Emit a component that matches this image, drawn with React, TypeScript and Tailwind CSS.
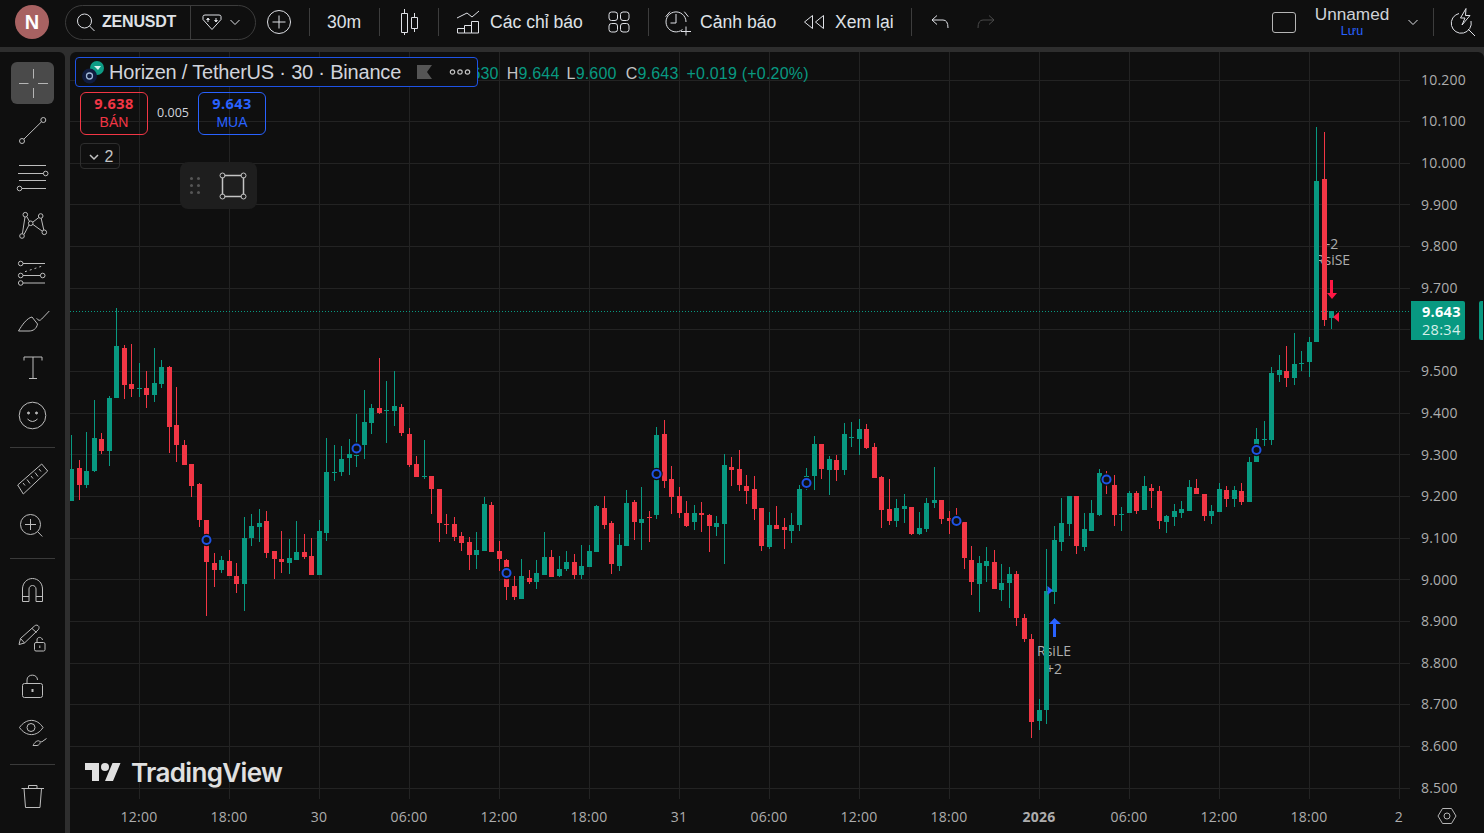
import React from 'react';

type Candle = [number, number, number, number, number];

// [green?, wick top, body top, body bottom, wick bottom]; one candle every 7.5px, first at x=71.5
const candles: Candle[] = [
  [1,435,469,501,501],[0,460,468,485,500],[1,432,471,485,488],[1,400,438,471,472],[0,433,439,451,454],
  [1,396,398,451,466],[1,308,346,398,398],[0,345,348,385,399],[0,344,384,389,397],[1,363,388,389,397],
  [0,371,388,395,408],[1,348,383,395,402],[1,360,367,384,388],[0,366,367,427,453],[0,387,425,445,462],
  [0,440,445,465,465],[0,464,464,486,497],[0,483,484,520,527],[0,520,520,562,616],[0,553,563,570,587],
  [1,556,560,570,573],[0,550,561,576,576],[0,563,576,584,593],[1,517,538,584,611],[1,514,526,538,546],
  [1,509,523,527,542],[0,511,521,553,558],[0,551,551,559,579],[0,531,559,562,573],[1,539,558,563,574],
  [1,521,552,560,560],[0,534,552,557,559],[0,538,556,575,575],[1,520,531,575,575],[1,438,472,533,541],
  [1,445,472,473,481],[1,446,459,472,476],[1,439,454,458,475],[1,414,455,456,467],[1,390,422,445,459],
  [1,404,408,423,434],[0,358,408,413,414],[1,381,410,411,443],[1,371,406,411,426],[0,404,407,433,436],
  [0,428,434,465,467],[0,456,464,477,477],
  [1,440,476,477,479],[0,476,476,489,514],[0,489,489,523,542],[0,514,524,525,534],[0,517,524,537,541],
  [0,532,536,543,551],[0,537,542,555,570],[1,532,550,555,569],[1,497,504,551,551],[0,502,505,552,552],
  [0,541,551,559,571],[0,559,560,587,600],[0,576,586,597,600],[1,559,576,599,599],[0,570,578,582,584],
  [1,560,573,582,589],[1,532,557,575,575],[0,550,557,577,577],[1,556,569,576,577],[1,551,562,569,571],
  [0,554,562,575,579],[1,545,566,575,579],[1,545,551,567,567],[1,505,506,552,552],[0,496,508,525,529],
  [0,521,523,564,574],[1,534,545,566,571],[1,490,503,546,546],[0,500,502,522,540],[1,487,519,523,550],
  [0,511,517,518,542],[1,427,435,515,519],[0,420,434,481,488],[0,466,479,497,514],[0,487,496,513,518],
  [0,501,513,526,527],[1,505,513,522,530],[0,502,513,515,532],[0,514,515,526,552],[1,516,523,527,536],
  [1,454,465,524,564],[0,457,467,470,486],[0,450,469,485,491],[0,475,486,491,504],[0,476,489,509,520],
  [0,508,508,546,551],[1,512,525,547,549],
  [0,506,525,529,529],[0,518,527,530,549],[1,513,525,531,543],[1,485,489,525,531],[1,468,476,477,490],
  [1,436,444,476,490],[0,444,444,469,479],[1,456,459,470,495],[0,455,460,470,481],[1,423,434,470,475],
  [1,422,437,438,447],[1,419,429,439,455],[0,424,429,448,449],[0,443,447,478,478],[0,476,477,510,528],
  [0,479,509,521,525],[1,499,508,521,527],[1,494,506,509,523],[0,507,507,534,535],[1,512,528,534,535],
  [1,498,503,529,532],[1,467,500,503,508],[0,500,500,519,524],[0,511,518,521,534],[0,508,518,522,526],
  [0,522,522,558,569],[0,546,560,582,595],[1,556,563,584,612],[1,547,561,566,582],[0,550,562,589,589],
  [1,564,583,590,601],[1,567,574,583,608],[0,571,574,618,626],[0,614,618,639,642],[0,634,639,722,738],
  [1,699,710,721,730],[1,549,591,710,724],[1,526,540,592,604],[1,498,523,542,551],[1,496,496,524,536],
  [0,496,496,546,554],[1,513,529,547,551],[1,500,513,531,531],[1,469,473,515,516],[0,471,476,484,494],
  [0,475,485,515,526],
  [1,507,514,515,531],[1,491,493,513,513],[0,491,493,511,514],[1,476,486,510,510],[0,484,488,491,508],
  [0,486,491,521,529],[1,515,516,522,533],[1,504,511,517,526],[1,501,509,513,518],[1,480,487,511,511],
  [0,479,488,494,494],[0,494,494,516,521],[1,505,511,516,524],[1,483,489,512,512],[0,486,490,499,507],
  [1,486,490,499,507],[0,483,491,502,505],[1,457,462,502,502],[1,428,439,462,462],[1,421,439,440,446],
  [1,367,373,440,445],[1,355,370,375,382],[0,346,371,378,387],[1,333,364,378,385],[1,351,363,364,371],
  [1,337,342,362,377],[1,127,181,342,342],[0,132,179,320,326],[1,311,311,318,329],
];

const rings = [[206.5,540],[356.5,448.5],[506.5,573],[656.5,474],[806.5,483],[956.5,521],[1106.5,479.5],[1256.5,450]];
const gridRows = Array.from({ length: 18 }, (_, i) => Math.round(79.5 + i * 41.65));
const gridCols = Array.from({ length: 15 }, (_, i) => 139 + i * 90);
const prices = ['10.200','10.100','10.000','9.900','9.800','9.700','','9.500','9.400','9.300','9.200','9.100','9.000','8.900','8.800','8.700','8.600','8.500'];
const times = ['12:00','18:00','30','06:00','12:00','18:00','31','06:00','12:00','18:00','2026','06:00','12:00','18:00','2'];

const Chart = () => (
  <svg className="block w-[1340px] h-[747px]" viewBox="70 52 1340 747" shapeRendering="crispEdges">
    {gridRows.map(y => <rect key={y} x={70} y={y} width={1340} height={1} fill="#232323" />)}
    {gridCols.map(x => <rect key={x} x={x} y={52} width={1} height={747} fill="#232323" />)}
    <g fill="#adadad" fontSize="14" textAnchor="middle" fontFamily="'Open Sans', sans-serif" shapeRendering="auto">
      <text x="1054" y="656">RsiLE</text>
      <text x="1054" y="674">+2</text>
      <text x="1332" y="249">-2</text>
      <text x="1333" y="265">RsiSE</text>
    </g>
    {candles.map(([g, wt, bt, bb, wb], i) => {
      const x = Math.floor(71.5 + 7.5 * i);
      const fill = g ? '#089981' : '#f23645';
      return (
        <g key={i} fill={fill}>
          <rect x={x} y={wt} width={1} height={wb - wt} />
          <rect x={x - 2} y={bt} width={5} height={Math.max(bb - bt, 1)} />
        </g>
      );
    })}
    <line x1="70" x2="1410" y1="311.5" y2="311.5" stroke="#089981" strokeDasharray="1 2" />
    <g shapeRendering="auto">
      {rings.map(([x, y]) => (
        <g key={x}>
          <circle cx={x} cy={y} r="6.2" fill="#0f0f0f" />
          <circle cx={x} cy={y} r="4" fill="none" stroke="#1e53e5" strokeWidth="2" />
        </g>
      ))}
      <path d="M1053 624h3V637h-3zM1049 624l5.500-6 6.500 6z" fill="#2962ff" />
      <path d="M1047.500 586l5.500 4.500-5.500 4.500z" fill="#2962ff" />
      <path d="M1330 280h3v13h-3zM1327 293h10l-5 6z" fill="#ff1744" />
      <path d="M1339 312v10l-6-5z" fill="#ff1744" />
    </g>
  </svg>
);

const stroke = { fill: 'none', stroke: 'currentColor', strokeWidth: 1 } as const;

// tool icons are drawn in page coordinates, the viewBox slides over them
const Tool = ({ cy, children }: { cy: number; children: React.ReactNode }) => (
  <svg className="block w-9 h-9 text-[#bdbdbd]" viewBox={`15 ${cy - 18} 36 36`} {...stroke}>
    {children}
  </svg>
);

const Separator = () => <div className="w-[45px] h-px bg-[#3a3a3a] ml-[10px]" />;

const Toolbar = () => (
  <aside className="w-[65px] shrink-0 bg-[#0f0f0f] rounded-tr-md pt-[7px]">
    <div className="mt-[3px] mb-[2px] ml-[11px] w-[43px] h-[42px] rounded-md bg-[#4a4a4a] pl-[4px] pt-[3px]">
      <Tool cy={83}>
        <path d="M19 83.500h9.500M38 83.500h10M33.500 69v9.500M33.500 88v10" stroke="#b5b5b5" />
      </Tool>
    </div>
    <div className="h-[48px] pl-[15px] pt-[6px]">
      <Tool cy={130}>
        <path d="M23.800 139.200L41.500 121.800" />
        <circle cx="22" cy="141" r="2.500" />
        <circle cx="43.300" cy="120" r="2.500" />
      </Tool>
    </div>
    <div className="h-[47px] pl-[15px] pt-[6px]">
      <Tool cy={178}>
        <path d="M19 165.500h27M18 173.500h25.500M19 180.500h27M22 188.500h24" />
        <circle cx="45.700" cy="173.500" r="2.300" />
        <circle cx="19.500" cy="188.500" r="2.300" />
      </Tool>
    </div>
    <div className="h-[47px] pl-[15px] pt-[6px]">
      <Tool cy={225}>
        <path d="M22.400 233.700L25 217M27 217L29.500 221.500M33 222L38.800 217.500M41.200 218.300L43.800 230M24 234.500L29 225M33 224.500L42 231" />
        <circle cx="25.300" cy="214.700" r="2.300" />
        <circle cx="40.700" cy="216" r="2.300" />
        <circle cx="30.700" cy="223.300" r="2.300" />
        <circle cx="22" cy="236" r="2.300" />
        <circle cx="44.300" cy="232.300" r="2.300" />
      </Tool>
    </div>
    <div className="h-[49px] pl-[15px] pt-[6px]">
      <Tool cy={272}>
        <path d="M23 263.500h22M23 275.500h17.500M23 283h22" />
        <path d="M25 271.700L43.300 265.700" strokeDasharray="2 3" />
        <circle cx="20.700" cy="263.500" r="2.300" />
        <circle cx="20.700" cy="275.500" r="2.300" />
        <circle cx="42.700" cy="275.500" r="2.300" />
        <circle cx="20.700" cy="283" r="2.300" />
      </Tool>
    </div>
    <div className="h-[47px] pl-[15px] pt-[6px]">
      <Tool cy={321}>
        <path d="M18.500 331C22 325 27 318 32 317L37.500 324C36.500 329 33 331 29 331Z" />
        <path d="M36.700 318.300Q39 322 41.700 319L49.300 311" />
      </Tool>
    </div>
    <div className="h-[47px] pl-[15px] pt-[6px]">
      <Tool cy={368}>
        <path d="M24 360.500v-3.500h18v3.500M33 357v21M29 378.500h8" />
      </Tool>
    </div>
    <div className="h-[47px] pl-[15px] pt-[6px]">
      <Tool cy={415}>
        <circle cx="32.500" cy="415.500" r="13.300" />
        <circle cx="28.500" cy="413" r="1" fill="currentColor" />
        <circle cx="36.500" cy="413" r="1" fill="currentColor" />
        <path d="M27.500 419Q32.500 424 37.500 419" />
      </Tool>
    </div>
    <div className="mt-[9px] mb-[7px]"><Separator /></div>
    <div className="h-[46px] pl-[15px] pt-[6px]">
      <Tool cy={479}>
        <path d="M17.700 485L41.700 464L47.700 471L23.300 494Z" />
        <path d="M23 483l2 2.500M27 479.500l3 4M31 476l2 2.500M35 472.500l3 4M39 469l2 2.500" />
      </Tool>
    </div>
    <div className="h-[48px] pl-[15px] pt-[6px]">
      <Tool cy={525}>
        <circle cx="30.500" cy="524.500" r="10" />
        <path d="M30.500 519v11M25 524.500h11M37.700 531.700L42.300 536.500" />
      </Tool>
    </div>
    <div className="mt-[9px] mb-[7px]"><Separator /></div>
    <div className="h-[48px] pl-[15px] pt-[6px]">
      <Tool cy={590}>
        <path d="M22.500 601.500V589C22.500 583 27 578.500 32.500 578.500C38 578.500 42.500 583 42.500 589V601.500H36V589C36 587 34.500 585.500 32.500 585.500C30.500 585.500 29 587 29 589V601.500Z" />
        <path d="M22.500 596.500H29M36 596.500H42.500" />
      </Tool>
    </div>
    <div className="h-[48px] pl-[15px] pt-[6px]">
      <Tool cy={638}>
        <path d="M19 644.500L20.500 638.500L34.500 626C36 624.500 38 625 38.800 626.500C39.300 627.700 39 629 38 630L24.500 643Z" />
        <path d="M32 628.500L36.500 632.500M20.500 638.500L24.500 643" />
        <rect x="34.500" y="642.500" width="10.500" height="8.500" rx="1.500" />
        <path d="M37 642.500V640C37 636.500 42 636.500 42.500 640" />
        <path d="M39.800 645.500v2.500" />
      </Tool>
    </div>
    <div className="h-[47px] pl-[15px] pt-[6px]">
      <Tool cy={686}>
        <rect x="22.500" y="683.500" width="20" height="14" rx="2" />
        <path d="M27 683.500V680C27 673.500 37.500 673.500 37.500 680" />
        <path d="M32.500 689v3" strokeWidth="2" />
      </Tool>
    </div>
    <div className="h-[47px] pl-[15px] pt-[6px]">
      <Tool cy={733}>
        <path d="M19.500 727.500C26 718 37 718 43 727.500C37 737 26 737 19.500 727.500Z" />
        <circle cx="31" cy="727.500" r="4" />
        <path d="M33 745.500C34.500 742.500 37 740 39.500 741C41 742 40 745 37 745.500Z" />
        <path d="M40.500 741.500Q42 742.500 43 741L46.500 738.500" />
      </Tool>
    </div>
    <div className="mt-[8px] mb-[8px]"><Separator /></div>
    <div className="pl-[15px] pt-[6px]">
      <Tool cy={797}>
        <path d="M21.500 788.500H44M24 788.500L25.500 807.500H40L41.500 788.500M28.500 788.500V785.500H37V788.500" />
      </Tool>
    </div>
  </aside>
);

const Divider = ({ className = '' }: { className?: string }) => <div className={`w-px h-[28px] bg-[#3d3d3d] shrink-0 ${className}`} />;

const Header = () => (
  <header className="h-[47px] shrink-0 bg-[#0f0f0f] flex items-center pl-[15px] pr-[8px] pb-[3px] text-[#dfe1e6] text-[17.600px]">
    <div className="w-[34px] h-[34px] rounded-full bg-[#a86262] flex items-center justify-center text-white font-bold text-[20px]">N</div>
    <div className="ml-[16px] w-[191px] h-[35px] rounded-full border border-[#3c3c3c] flex items-center">
      <div className="w-[125px] h-full border-r border-[#3c3c3c] flex items-center shrink-0">
        <svg className="ml-[9px] w-5 h-5" viewBox="0 0 20 20" {...stroke}>
          <circle cx="9.500" cy="9" r="7" />
          <path d="M14.500 14l5 5" />
        </svg>
        <span className="ml-[7px] font-bold text-[16px] tracking-[-0.2px]">ZENUSDT</span>
      </div>
      <svg className="ml-[10px] w-[22px] h-[18px]" viewBox="0 0 22 18" {...stroke}>
        <path d="M2 3.500Q2 2 4 2H18Q20 2 20 3.500V6.500L11 16.500L2 6.500Z" />
        <path d="M7 9V5.500M5.500 7L7 5L8.500 7M15 5V8.500M13.500 7L15 9L16.500 7" fill="currentColor" />
      </svg>
      <svg className="ml-[6px] w-3 h-3" viewBox="0 0 12 12" {...stroke}>
        <path d="M1.500 4L6 8.500L10.500 4" />
      </svg>
    </div>
    <svg className="ml-[11px] w-6 h-6" viewBox="0 0 24 24" {...stroke}>
      <circle cx="12" cy="12" r="11.500" />
      <path d="M12 5.500v13M5.500 12h13" />
    </svg>
    <Divider className="ml-[18px]" />
    <span className="ml-[17px] w-[52px]">30m</span>
    <Divider />
    <svg className="ml-[20px] w-5 h-7" viewBox="0 0 20 28" {...stroke}>
      <path d="M1.500 5.500h6v19h-6zM4.500 1v4.500M4.500 24.500V27M11.500 9.500h6v11h-6zM14.500 5v4.500M14.500 20.500V24" />
    </svg>
    <Divider className="ml-[18px]" />
    <svg className="ml-[17px] w-6 h-7" viewBox="0 0 24 28" {...stroke}>
      <path d="M1 10l10-5 5 4 7-6M1.500 20.500h7v4.500h-7zM8.500 17.500h7v7.500h-7zM15.500 13.500h7v11.500h-7z" />
    </svg>
    <span className="ml-[10px] w-[93px] whitespace-nowrap">Các chỉ báo</span>
    <svg className="ml-[24px] w-6 h-6" viewBox="0 0 24 24" {...stroke}>
      <rect x="2" y="2" width="8.500" height="8.500" rx="2.500" />
      <rect x="13.500" y="2" width="8.500" height="8.500" rx="2.500" />
      <rect x="2" y="13.500" width="8.500" height="8.500" rx="2.500" />
      <rect x="13.500" y="13.500" width="8.500" height="8.500" rx="2.500" />
    </svg>
    <Divider className="ml-[17px]" />
    <svg className="ml-[15px] w-7 h-7" viewBox="0 0 28 28" {...stroke}>
      <path d="M18.500 21.500A10 10 0 1 1 22 14M12 6v9H6.500M1.700 8.700L6 3.700M20.300 3.700L24.300 8.700M17 23.500h10M22 18.500v9" />
    </svg>
    <span className="ml-[8px] w-[76px] whitespace-nowrap">Cảnh báo</span>
    <svg className="ml-[26px] w-6 h-6" viewBox="0 0 24 24" {...stroke}>
      <path d="M2.500 12l8-6.500v13zM13.500 12l8-6.500v13z" />
    </svg>
    <span className="ml-[9px] w-[58px] whitespace-nowrap">Xem lại</span>
    <Divider className="ml-[18px]" />
    <svg className="ml-[18px] w-5 h-5" viewBox="0 0 20 20" {...stroke}>
      <path d="M7 3.500L2 8l5 4.500M2 8h11Q18 8 18 16" />
    </svg>
    <svg className="ml-[26px] w-5 h-5 text-[#4a4a4a]" viewBox="0 0 20 20" {...stroke}>
      <path d="M13 3.500L18 8l-5 4.500M18 8H7Q2 8 2 16" />
    </svg>
    <div className="ml-auto w-6 h-[21px] rounded-[3px] border border-[#b5b5b5] shrink-0" />
    <div className="ml-[18px] w-[76px] flex flex-col items-center leading-none">
      <span className="text-[#cfd2d8] text-[17.200px]">Unnamed</span>
      <span className="text-[#2962ff] text-[12.500px] mt-[2px]">Lưu</span>
    </div>
    <svg className="ml-[17px] w-3 h-3" viewBox="0 0 12 12" {...stroke}>
      <path d="M1.500 4L6 8.500L10.500 4" />
    </svg>
    <Divider className="ml-[14px]" />
    <svg className="ml-[16px] w-[26px] h-[30px]" viewBox="0 0 26 30" {...stroke}>
      <path d="M9 6.500A10 10 0 1 0 21 14M18 22l7 7M16 1.500L10.500 11H15L12 18L20 8.500H15.500Z" />
    </svg>
  </header>
);

const Legend = () => (
  <div className="absolute left-[5px] top-[5px] font-['Liberation_Sans',sans-serif]">
    <div className="flex items-start">
      <div className="relative z-10 w-[403px] h-[30px] rounded border border-[#1e53e5] bg-[#0f0f0f] flex items-center">
        <svg className="ml-[5px] w-[24px] h-[24px] shrink-0" viewBox="0 0 24 24">
          <circle cx="16" cy="8" r="7" fill="#0e9c85" />
          <path d="M13 6h7l-3 4z" fill="#d9f2ee" />
          <circle cx="8.500" cy="16" r="7.500" fill="#101c3f" />
          <circle cx="8.500" cy="16" r="3" fill="none" stroke="#9fb6d6" strokeWidth="1.300" />
        </svg>
        <span className="ml-[4px] text-[20px] text-[#d1d4dc] whitespace-nowrap tracking-[-0.2px]">Horizen / TetherUS · 30 · Binance</span>
        <svg className="ml-[16px] w-[16px] h-[14px]" viewBox="0 0 16 14">
          <path d="M0 0h15l-5 7 5 7H0z" fill="#555555" />
        </svg>
        <svg className="ml-[16px] w-[22px] h-[8px]" viewBox="0 0 22 8" fill="none" stroke="#c4c4c4" strokeWidth="1.200">
          <circle cx="3.500" cy="4" r="2.200" />
          <circle cx="11" cy="4" r="2.200" />
          <circle cx="18.500" cy="4" r="2.200" />
        </svg>
      </div>
      <div className="ml-[-33px] mt-[5px] text-[16px] tracking-[0.2px] flex whitespace-nowrap text-[#089981]">
        <span className="text-[#c4c4c4]">O</span><span>9.630</span>
        <span className="text-[#c4c4c4] ml-[8px]">H</span><span>9.644</span>
        <span className="text-[#c4c4c4] ml-[7px]">L</span><span>9.600</span>
        <span className="text-[#c4c4c4] ml-[9px]">C</span><span>9.643</span>
        <span className="ml-[8px]">+0.019 (+0.20%)</span>
      </div>
    </div>
    <div className="mt-[5px] ml-[5px] flex items-center">
      <div className="w-[68px] h-[43px] rounded-md border border-[#f23645] flex flex-col items-center justify-center text-[#f23645] leading-[18px] pb-[2px]">
        <span className="font-['Open_Sans',sans-serif] font-bold text-[14.500px] tracking-[0.4px]">9.638</span>
        <span className="text-[14px]">BÁN</span>
      </div>
      <span className="w-[50px] text-center text-[12.500px] text-[#d1d4dc] font-['Open_Sans',sans-serif]">0.005</span>
      <div className="w-[68px] h-[43px] rounded-md border border-[#2962ff] flex flex-col items-center justify-center text-[#2962ff] leading-[18px] pb-[2px]">
        <span className="font-['Open_Sans',sans-serif] font-bold text-[14.500px] tracking-[0.4px]">9.643</span>
        <span className="text-[14px]">MUA</span>
      </div>
    </div>
    <div className="mt-[8px] ml-[5px] w-[40px] h-[26px] rounded border border-[#2e2e2e] flex items-center justify-center gap-[5px] pt-[1px] pl-[1px] text-[#c4c4c4] text-[16px]">
      <svg className="w-3 h-3" viewBox="0 0 12 12" {...stroke} strokeWidth={1.500}>
        <path d="M2 4L6 8L10 4" />
      </svg>
      <span>2</span>
    </div>
  </div>
);

const App = () => (
  <div className="w-[1484px] h-[833px] overflow-hidden bg-[#2e2e2e] flex flex-col font-['Liberation_Sans',sans-serif]">
    <Header />
    <div className="flex flex-1 pt-[5px] min-h-0">
      <Toolbar />
      <main className="relative ml-[5px] flex-1 bg-[#0f0f0f] rounded-t-md overflow-hidden font-['Open_Sans',sans-serif] text-[14px] text-[#adadad]">
        <div className="flex h-[747px] overflow-hidden">
          <Chart />
          <div className="flex-1 pl-[11px] pt-[6.500px] tracking-[0.2px]">
            {prices.map((p, i) => (
              <div key={i} className="h-[41.650px] flex items-center">{p}</div>
            ))}
          </div>
        </div>
        <div className="flex h-[34px] pl-[24px] items-center tracking-[0.3px]">
          {times.map((t, i) => (
            <div key={i} className={`w-[90px] shrink-0 text-center ${t === '2026' ? 'font-bold' : ''}`}>{t}</div>
          ))}
          <svg className="ml-[-7px] w-5 h-5" viewBox="0 0 20 20" fill="none" stroke="#b5b5b5">
            <path d="M5.500 2.500h9l4.500 7.500-4.500 7.500h-9L1 10z" />
            <circle cx="10" cy="10" r="3" />
          </svg>
        </div>

        <Legend />

        <div className="absolute left-[110px] top-[110px] w-[77px] h-[47px] rounded-lg bg-[#1e1e1e] flex items-center">
          <div className="ml-[10px] grid grid-cols-2 gap-x-[4px] gap-y-[4px]">
            {[0, 1, 2, 3, 4, 5].map(d => <span key={d} className="w-[3px] h-[3px] rounded-full bg-[#555555]" />)}
          </div>
          <svg className="ml-[17px] w-[32px] h-[32px]" viewBox="0 0 32 32" {...stroke} stroke="#c4c4c4">
            <path d="M5.500 7.500V24.500M26.500 7.500V24.500M7.500 5.500H24.500M7.500 26.500H24.500" strokeWidth="1.500" />
            <circle cx="5.500" cy="5.500" r="2.500" />
            <circle cx="26.500" cy="5.500" r="2.500" />
            <circle cx="5.500" cy="26.500" r="2.500" />
            <circle cx="26.500" cy="26.500" r="2.500" />
          </svg>
        </div>

        <div className="absolute left-[15px] top-[707px] flex items-center text-[#e0e0e0]">
          <svg className="w-[36px] h-[28px]" viewBox="0 0 36 28" fill="currentColor">
            <path d="M14 22H7V11H0V4h14v18zM28 22h-8l7.500-18h8L28 22z" />
            <circle cx="20" cy="8" r="4" />
          </svg>
          <span className="ml-[10px] font-['Inter',sans-serif] font-semibold text-[26px] leading-none tracking-[-0.65px]">TradingView</span>
        </div>

        <div className="absolute left-[1341px] top-[249px] w-[54px] h-[39px] rounded-r-[2px] bg-[#089981] flex flex-col justify-center pl-[11px] text-[14.500px] tracking-[0.3px] leading-[18px]">
          <span className="text-white font-bold">9.643</span>
          <span className="text-[#d5efe9]">28:34</span>
        </div>
        <div className="absolute left-[1409px] top-[249px] w-[4px] h-[39px] rounded-l-[2px] bg-[#089981]" />
      </main>
    </div>
  </div>
);

export default App;
